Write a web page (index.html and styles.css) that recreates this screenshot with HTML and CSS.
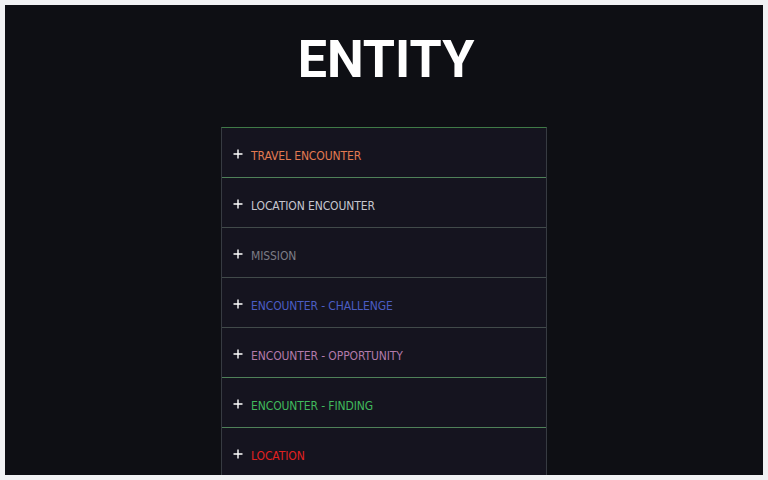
FILE: index.html
```html
<!DOCTYPE html>
<html lang="en">
<head>
    <meta charset="UTF-8">
    <meta name="viewport" content="width=device-width, initial-scale=1.0">
    <title>Entity</title>
    <link rel="stylesheet" href="styles.css">
</head>
<body>
    <div class="app">
        <h1 class="title">ENTITY</h1>

        <ul class="entity-list">
            <li class="entity-item sep-green">
                <svg class="plus" viewBox="0 0 10 10"><path d="M5 0.5V9.5M0.5 5H9.5"/></svg>
                <span class="entity-name travel">Travel Encounter</span>
            </li>
            <li class="entity-item sep-grey">
                <svg class="plus" viewBox="0 0 10 10"><path d="M5 0.5V9.5M0.5 5H9.5"/></svg>
                <span class="entity-name location-encounter">Location Encounter</span>
            </li>
            <li class="entity-item sep-grey">
                <svg class="plus" viewBox="0 0 10 10"><path d="M5 0.5V9.5M0.5 5H9.5"/></svg>
                <span class="entity-name mission">Mission</span>
            </li>
            <li class="entity-item sep-grey">
                <svg class="plus" viewBox="0 0 10 10"><path d="M5 0.5V9.5M0.5 5H9.5"/></svg>
                <span class="entity-name challenge">Encounter - Challenge</span>
            </li>
            <li class="entity-item sep-green">
                <svg class="plus" viewBox="0 0 10 10"><path d="M5 0.5V9.5M0.5 5H9.5"/></svg>
                <span class="entity-name opportunity">Encounter - Opportunity</span>
            </li>
            <li class="entity-item sep-green">
                <svg class="plus" viewBox="0 0 10 10"><path d="M5 0.5V9.5M0.5 5H9.5"/></svg>
                <span class="entity-name finding">Encounter - Finding</span>
            </li>
            <li class="entity-item sep-green">
                <svg class="plus" viewBox="0 0 10 10"><path d="M5 0.5V9.5M0.5 5H9.5"/></svg>
                <span class="entity-name location">Location</span>
            </li>
        </ul>
    </div>
</body>
</html>
```

FILE: styles.css
```css
* {
    margin: 0;
    padding: 0;
    box-sizing: border-box;
}

body {
    background-color: #f1f2f4;
    font-family: "Liberation Sans Narrow", "DejaVu Sans Condensed", Roboto, sans-serif;
}

.app {
    margin: 5px;
    height: calc(100vh - 10px);
    background-color: #0e0f14;
    overflow: hidden;
}

.title {
    font-family: Roboto, "Liberation Sans", sans-serif;
    font-size: 52px;
    font-weight: 700;
    line-height: 1;
    color: #ffffff;
    text-align: center;
    padding-top: 29px;
    padding-left: 4px;
    margin-bottom: 41px;
}

.entity-list {
    list-style: none;
    width: 326px;
    margin: 0 auto;
    border-left: 1px solid #373b42;
    border-right: 1px solid #373b42;
    border-top: 1px solid #3f7a47;
}

.entity-item {
    display: flex;
    align-items: center;
    gap: 8px;
    height: 50px;
    padding: 7px 11px 0;
    background-color: #15141f;
    border-bottom: 1px solid #46524c;
}

.entity-item.sep-green {
    border-bottom-color: #4f8159;
}

.entity-item.sep-grey {
    border-bottom-color: #414a4a;
}

.plus {
    width: 10px;
    height: 10px;
    stroke: #ffffff;
    stroke-width: 1.4;
    fill: none;
    margin-top: -4px;
}

.entity-name {
    font-size: 12px;
    text-transform: uppercase;
    letter-spacing: -0.1px;
}

.travel { color: #e27a52; }
.location-encounter { color: #c6c6ce; }
.mission { color: #7c7c86; }
.challenge { color: #4b5dc2; }
.opportunity { color: #b27aaa; }
.finding { color: #40b85c; }
.location { color: #e0211f; }
```
